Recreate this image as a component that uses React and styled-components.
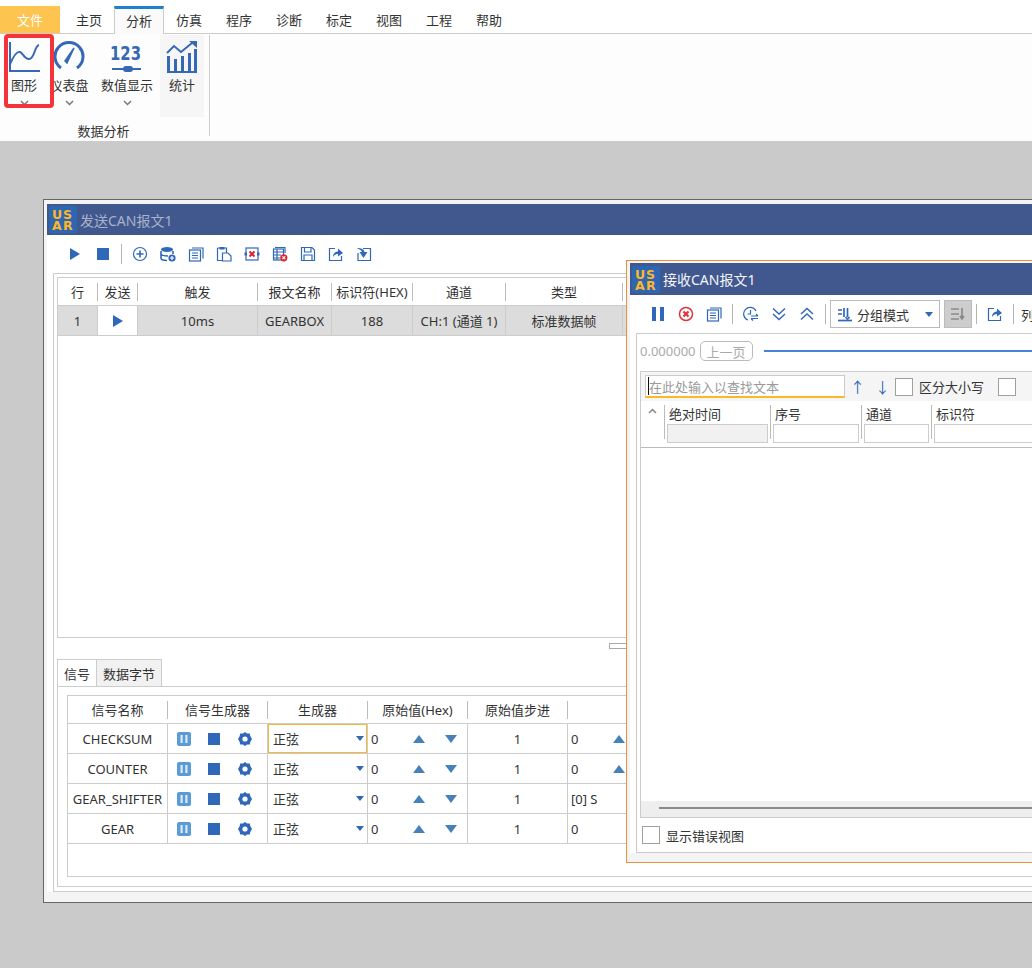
import React from "react";
import styled, { createGlobalStyle } from "styled-components";

const BLUE = "#2f67b9";
const STEEL = "#4682b8";
const LINE = "#cccccc";

const GlobalStyle = createGlobalStyle`
  html, body {
    margin: 0;
    padding: 0;
    height: 100%;
    overflow: hidden;
  }
  body {
    font-family: "Noto Sans", "Noto Sans CJK SC", sans-serif;
    font-size: 13px;
    color: #333;
  }
  * {
    box-sizing: border-box;
  }
`;

const Page = styled.div`
  position: relative;
  width: 1032px;
  height: 968px;
  display: flex;
  flex-direction: column;
  overflow: hidden;
  background: #cacaca;
`;

/* 上方功能区 */
const TabBar = styled.div`
  height: 34px;
  padding-top: 6px;
  display: flex;
  background: #fff;
  border-bottom: 1px solid ${LINE};
`;

const FileTab = styled.div`
  width: 60px;
  margin-right: 4px;
  display: flex;
  align-items: center;
  justify-content: center;
  background: #fdc44f;
  color: #fff;
`;

const MenuTab = styled.div`
  width: 50px;
  height: ${(props) => (props.$active ? "28px" : "27px")};
  display: flex;
  align-items: center;
  justify-content: center;
  ${(props) =>
    props.$active &&
    `
    background: #fafafa;
    border: 1px solid ${LINE};
    border-bottom: none;
    border-top: 3px solid #1f7fd0;
    padding-bottom: 2px;
  `}
`;

const Ribbon = styled.div`
  height: 107px;
  display: flex;
  background: #fdfdfd;
`;

const RibbonGroup = styled.div`
  width: 210px;
  margin-top: 1px;
  height: 101px;
  display: flex;
  flex-direction: column;
  border-right: 1px solid ${LINE};
`;

const RibbonTools = styled.div`
  height: 82px;
  display: flex;
  padding-left: 4px;
`;

const RibbonTool = styled.div`
  width: ${(props) => props.$width}px;
  height: 82px;
  display: flex;
  flex-direction: column;
  align-items: center;
  padding-top: 5px;
  background: ${(props) => (props.$hover ? "#f6f6f6" : "transparent")};
`;

const ToolIcon = styled.div`
  height: 33px;
  display: flex;
  align-items: center;
  justify-content: center;
`;

const ToolLabel = styled.div`
  margin-top: 3px;
  line-height: 18px;
  white-space: nowrap;
`;

const Caret = styled.div`
  margin-top: 6px;
  color: #777;
  display: flex;
`;

const GroupName = styled.div`
  text-align: center;
  line-height: 18px;
  margin-top: 5px;
  padding-right: 2px;
`;

const Highlight = styled.div`
  position: absolute;
  left: 4px;
  top: 34px;
  width: 50px;
  height: 74px;
  border: 4px solid #f4333a;
  border-radius: 4px;
`;

/* 桌面上的窗口 */
const Win = styled.div`
  position: absolute;
  left: ${(props) => props.$left}px;
  top: ${(props) => props.$top}px;
  width: ${(props) => props.$width}px;
  height: ${(props) => props.$height}px;
  border: 1px solid ${(props) => props.$edge};
  background: #f4f4f4;
  display: flex;
  flex-direction: column;
  padding: ${(props) => props.$pad};
`;

const TitleBar = styled.div`
  height: ${(props) => props.$height}px;
  flex: none;
  background: #41588f;
  display: flex;
  align-items: center;
  padding-left: 2px;
  gap: 3px;
  font-size: 14px;
  color: ${(props) => (props.$active ? "#f2f4f8" : "#a9b2c8")};
`;

const WinBody = styled.div`
  flex: 1;
  min-height: 0;
  background: #fff;
  display: flex;
  flex-direction: column;
`;

const Toolbar = styled.div`
  height: ${(props) => props.$height}px;
  flex: none;
  display: flex;
  align-items: center;
  padding-left: ${(props) => props.$left}px;
`;

const IconBtn = styled.div`
  width: 28px;
  height: 28px;
  flex: none;
  display: flex;
  align-items: center;
  justify-content: center;
`;

const ToolSep = styled.div`
  width: 1px;
  height: 20px;
  flex: none;
  margin: 0 ${(props) => props.$gap || 4}px;
  background: #b4b4b4;
`;

const Frame = styled.div`
  flex: 1;
  min-height: 0;
  margin: 0 0 ${(props) => props.$bottom}px ${(props) => props.$left}px;
  border: 1px solid ${LINE};
  padding: ${(props) => props.$pad};
  display: flex;
  flex-direction: column;
`;

/* 表格 */
const MsgBox = styled.div`
  height: 361px;
  flex: none;
  border: 1px solid ${LINE};
  display: flex;
  flex-direction: column;
`;

const HeadRow = styled.div`
  display: grid;
  grid-template-columns: ${(props) => props.$cols};
  height: ${(props) => props.$height}px;
  flex: none;
  align-items: center;
  border-bottom: 1px solid ${LINE};
`;

const HeadCell = styled.div`
  height: 18px;
  line-height: 18px;
  text-align: center;
  white-space: nowrap;
  border-right: 1px solid #bdbdbd;
`;

const BodyRow = styled.div`
  display: grid;
  grid-template-columns: ${(props) => props.$cols};
  height: 30px;
  flex: none;
  background: ${(props) => props.$bg || "#fff"};
  border-bottom: 1px solid ${LINE};
`;

const Cell = styled.div`
  display: flex;
  align-items: center;
  justify-content: center;
  white-space: nowrap;
  overflow: hidden;
  border-right: 1px solid ${LINE};
  background: ${(props) => props.$bg || "transparent"};
`;

const Splitter = styled.div`
  height: 21px;
  flex: none;
  padding: 5px 0 0 552px;
`;

const SplitThumb = styled.div`
  width: 20px;
  height: 6px;
  border: 1px solid #aaa;
  background: #fff;
`;

const TabStrip = styled.div`
  height: 27px;
  flex: none;
  display: flex;
`;

const PanelTab = styled.div`
  width: ${(props) => props.$width}px;
  display: flex;
  align-items: center;
  justify-content: center;
  border: 1px solid ${LINE};
  border-left: ${(props) => (props.$active ? `1px solid ${LINE}` : "none")};
  border-bottom: ${(props) => (props.$active ? "1px solid #fff" : `1px solid ${LINE}`)};
  margin-bottom: -1px;
  background: ${(props) => (props.$active ? "#fff" : "#f1f1f1")};
`;

const TabPanel = styled.div`
  flex: 1;
  min-height: 0;
  border: 1px solid ${LINE};
  padding: 8px 0 9px 9px;
  display: flex;
`;

const SignalTable = styled.div`
  flex: 1;
  border: 1px solid ${LINE};
  display: flex;
  flex-direction: column;
`;

const ButtonsCell = styled(Cell)`
  justify-content: flex-start;
  padding-left: 9px;
  gap: 17px;
`;

const GenSelect = styled(Cell)`
  justify-content: space-between;
  padding: 0 3px 0 5px;
  ${(props) => props.$focus && "box-shadow: inset 0 0 0 1px #f5b935;"}
`;

const StepCell = styled(Cell)`
  justify-content: flex-start;
  padding-left: 3px;
`;

const StepValue = styled.span`
  width: 42px;
`;

const StepArrows = styled.span`
  display: flex;
  gap: 20px;
`;

const Tri = styled.span`
  width: 0;
  height: 0;
  border-left: 6px solid transparent;
  border-right: 6px solid transparent;
  ${(props) =>
    props.$down
      ? `border-top: 8px solid ${STEEL};`
      : `border-bottom: 8px solid ${STEEL};`}
`;

const SmallDown = styled.span`
  width: 0;
  height: 0;
  border-left: 4px solid transparent;
  border-right: 4px solid transparent;
  border-top: 5px solid ${BLUE};
`;

/* 接收窗口 */
const Combo = styled.div`
  width: 110px;
  height: 28px;
  flex: none;
  border: 1px solid #bbb;
  display: flex;
  align-items: center;
  padding: 0 6px;
  gap: 4px;
`;

const ComboText = styled.span`
  flex: 1;
`;

const Toggle = styled.div`
  width: 28px;
  height: 28px;
  flex: none;
  margin-left: 4px;
  background: #cdcdcd;
  border: 1px solid #bbb;
  display: flex;
  align-items: center;
  justify-content: center;
`;

const ClippedLabel = styled.span`
  margin-left: 3px;
  white-space: nowrap;
`;

const Pager = styled.div`
  height: 37px;
  flex: none;
  display: flex;
  align-items: center;
  padding: 0 0 3px 3px;
  color: #aaa;
`;

const PageBtn = styled.div`
  width: 53px;
  height: 20px;
  margin: 0 11px 0 4px;
  display: flex;
  align-items: center;
  justify-content: center;
  border: 1px solid #bbb;
  border-radius: 5px;
`;

const TimeLine = styled.div`
  flex: 1;
  height: 2px;
  background: #4a80e0;
`;

const LogBox = styled.div`
  flex: 1;
  min-height: 0;
  margin-left: 3px;
  border: 1px solid ${LINE};
  border-width: 1px 0 1px 1px;
  display: flex;
  flex-direction: column;
`;

const SearchRow = styled.div`
  height: 29px;
  flex: none;
  background: #f5f5f5;
  display: flex;
  align-items: center;
  padding-left: 4px;
`;

const SearchInput = styled.div`
  width: 200px;
  height: 23px;
  flex: none;
  background: #fff;
  border: 1px solid #ccc;
  border-bottom: 2px solid #fbb829;
  color: #9a9a9a;
  display: flex;
  align-items: center;
`;

const Cursor = styled.span`
  width: 1px;
  height: 18px;
  background: #111;
  margin-left: 2px;
`;

const ArrowBtn = styled.span`
  width: 25px;
  text-align: center;
  color: ${BLUE};
  font-size: 15px;
  flex: none;
`;

const Check = styled.span`
  width: 18px;
  height: 18px;
  flex: none;
  border: 1px solid #a0a0a0;
  background: #fff;
`;

const CheckLabel = styled.span`
  margin: 0 14px 0 6px;
  white-space: nowrap;
`;

const LogHead = styled.div`
  height: 47px;
  flex: none;
  display: grid;
  grid-template-columns: 23px 106px 91px 70px 200px;
  border-bottom: 1px solid #bbb;
  padding-top: 4px;
`;

const SortCell = styled.div`
  display: flex;
  justify-content: center;
  padding-top: 3px;
  color: #888;
`;

const LogCol = styled.div`
  height: 34px;
  border-left: 1px solid #bbb;
  padding-left: 4px;
  line-height: 18px;
  white-space: nowrap;
`;

const FilterBox = styled.div`
  height: 19px;
  margin: 1px 2px 0 -2px;
  border: 1px solid ${LINE};
  background: ${(props) => (props.$off ? "#f1f1f1" : "#fff")};
`;

const LogBody = styled.div`
  flex: 1;
  min-height: 0;
`;

const HScroll = styled.div`
  height: 16px;
  flex: none;
  background: #eeeeee;
  padding: 6px 0 0 18px;
`;

const HThumb = styled.div`
  height: 2px;
  background: #8a8a8a;
`;

const ErrorRow = styled.div`
  height: 34px;
  flex: none;
  display: flex;
  align-items: center;
  padding: 0 0 0 5px;
`;

const Logo = () => (
  <svg width="28" height="27" viewBox="0 0 28 27">
    <rect width="28" height="27" rx="2" fill="#2f66b2" />
    <g fontFamily="'DejaVu Sans', sans-serif" fontWeight="bold" fontSize="12.5" fill="#fcb62b">
      <text x="3" y="12.5">U</text>
      <text x="14" y="12.5">S</text>
      <text x="3" y="24">A</text>
      <text x="14" y="24">R</text>
    </g>
  </svg>
);

const Icon = ({ size = 16, color = BLUE, children }) => (
  <svg width={size} height={size} viewBox="0 0 16 16" fill="none" stroke={color} strokeWidth="1.2">
    {children}
  </svg>
);

const icons = {
  play: <path d="M3 2 L13 8 L3 14 Z" fill={BLUE} stroke="none" />,
  stop: <rect x="2" y="2" width="12" height="12" fill={BLUE} stroke="none" />,
  addCircle: (
    <>
      <circle cx="8" cy="8" r="6.5" />
      <path d="M4.5 8 H11.5 M8 4.5 V11.5" strokeWidth="1.6" />
    </>
  ),
  dbAdd: (
    <>
      <ellipse cx="7" cy="3.5" rx="6" ry="2.5" fill={BLUE} stroke="none" />
      <path d="M1 5 V12 C1 14 5 14.5 7 14.5 M13 5 V8 M1 8 C2 10 5 10 8 10" strokeWidth="1.6" />
      <circle cx="12" cy="12" r="3.6" fill={BLUE} stroke="none" />
      <path d="M10 12 H14 M12 10 V14" stroke="#fff" />
    </>
  ),
  doc: (
    <>
      <rect x="1.5" y="4" width="11" height="11" />
      <path d="M4 2 H15 V12.5 M4 7 H10 M4 9.5 H10 M4 12 H10" />
    </>
  ),
  paste: (
    <>
      <path d="M1.5 2 H10.5 V7 M1.5 2 V14.5 H6" />
      <path d="M6.5 7 H12 L15 10 V15 H6.5 Z" />
      <rect x="3.5" y="1" width="5" height="2.5" fill={BLUE} stroke="none" />
    </>
  ),
  delBox: (
    <>
      <rect x="2" y="2" width="12" height="12" />
      <rect x="0.5" y="6.5" width="2.5" height="3" fill={BLUE} stroke="none" />
      <rect x="13" y="6.5" width="2.5" height="3" fill={BLUE} stroke="none" />
      <path d="M5.5 5.5 L10.5 10.5 M10.5 5.5 L5.5 10.5" stroke="#d8272d" strokeWidth="2" />
    </>
  ),
  tableDel: (
    <>
      <rect x="1.5" y="3" width="10" height="11" />
      <path d="M1.5 6 H11.5 M1.5 9 H9 M1.5 12 H8 M5 3 V14 M3 1.5 H13 V7" />
      <circle cx="11.8" cy="11.8" r="3.6" fill="#d8272d" stroke="none" />
      <path d="M10.4 10.4 L13.2 13.2 M13.2 10.4 L10.4 13.2" stroke="#fff" />
    </>
  ),
  save: (
    <>
      <path d="M1.5 1.5 H12 L14.5 4 V14.5 H1.5 Z" />
      <path d="M4.5 2 V6 H11 V2 M4 14 V9 H12 V14" />
    </>
  ),
  exportBox: (
    <>
      <path d="M7 2.5 H1.5 V14.5 H13.5 V10" />
      <path d="M5 11 C5 7 8 5.5 10 5.5 V2.5 L15 7 L10 10.5 V8 C8 8 6 9 5 11 Z" fill={BLUE} stroke="none" />
    </>
  ),
  importBox: (
    <>
      <path d="M7 2.5 H14.5 V14.5 H2 V7" />
      <path d="M1 2 C5 2 8 3 8.5 6 H11.5 L7.5 12 L3.5 6 H6 C5.5 4 3 3.5 1 2 Z" fill={BLUE} stroke="none" />
    </>
  ),
  pause: (
    <>
      <rect x="2" y="1" width="4" height="14" fill={BLUE} stroke="none" />
      <rect x="10" y="1" width="4" height="14" fill={BLUE} stroke="none" />
    </>
  ),
  stopX: (
    <>
      <circle cx="8" cy="8" r="6.5" stroke="#e0343a" strokeWidth="1.5" />
      <path d="M5.5 5.5 L10.5 10.5 M10.5 5.5 L5.5 10.5" stroke="#e0343a" strokeWidth="2.2" />
    </>
  ),
  clockSwap: (
    <>
      <path d="M13 5 A6.5 6.5 0 1 0 5 14" />
      <path d="M7.5 4 V8 H4.5" />
      <path d="M8 10 H15 M15 12.5 H8 M13 8 L15 10 M10 14.5 L8 12.5" />
    </>
  ),
  chevDown: <path d="M2 2.5 L8 8 L14 2.5 M2 8 L8 13.5 L14 8" strokeWidth="1.4" />,
  chevUp: <path d="M2 8 L8 2.5 L14 8 M2 13.5 L8 8 L14 13.5" strokeWidth="1.4" />,
  group: (
    <>
      <path d="M1 4 H5 M1 8 H5 M7 2 V11 M10.5 2 V11 M8.5 11 L10.5 13 L12.5 11" strokeWidth="1.7" />
      <path d="M1 14.5 H15" strokeWidth="1.7" />
    </>
  ),
  gear: (
    <>
      <path
        d="M8 1 L10 2.6 L12.8 2.4 L13.3 5 L15 8 L13.3 11 L12.8 13.6 L10 13.4 L8 15 L6 13.4 L3.2 13.6 L2.7 11 L1 8 L2.7 5 L3.2 2.4 L6 2.6 Z"
        fill={BLUE}
        stroke="none"
      />
      <circle cx="8" cy="8" r="2.6" fill="#fff" stroke="none" />
    </>
  ),
};

const PauseTile = () => (
  <svg width="14" height="14" viewBox="0 0 14 14">
    <rect width="14" height="14" rx="2" fill="#5b9bd5" />
    <rect x="3.5" y="3" width="2.2" height="8" fill="#dbe9f6" />
    <rect x="8.3" y="3" width="2.2" height="8" fill="#dbe9f6" />
  </svg>
);

const SolidStop = () => (
  <svg width="12" height="12" viewBox="0 0 12 12">
    <rect width="12" height="12" fill={BLUE} />
  </svg>
);

const GraphIcon = () => (
  <svg width="32" height="32" viewBox="0 0 32 32" fill="none" stroke="#3568b5" strokeWidth="2">
    <path d="M2 1 V30 H32" />
    <path d="M2 23 C6 14 9 10 12 11 C15 12 16 18 21 18 C27 18 26 5 31 4" />
  </svg>
);

const GaugeIcon = () => (
  <svg width="32" height="32" viewBox="0 0 32 32" fill="none" stroke="#3568b5" strokeWidth="3">
    <path d="M8 27 A14 14 0 1 1 24 27" />
    <path d="M21 7 L12 20 L14 22 Z" fill="#3568b5" strokeWidth="1.5" />
  </svg>
);

const NumberIcon = () => (
  <svg width="34" height="32" viewBox="0 0 34 32">
    <text x="0" y="19" fontFamily="'DejaVu Sans', sans-serif" fontWeight="bold" fontSize="19" fill="#3568b5" textLength="31" lengthAdjust="spacingAndGlyphs">
      123
    </text>
    <path d="M2 28 H31" stroke="#3568b5" strokeWidth="2" />
    <rect x="13" y="25" width="10" height="6" rx="3" fill="#3568b5" />
  </svg>
);

const StatsIcon = () => (
  <svg width="32" height="32" viewBox="0 0 32 32" fill="#3568b5">
    <rect x="1" y="15" width="3" height="15" />
    <rect x="8" y="18" width="3" height="12" />
    <rect x="15" y="15" width="3" height="15" />
    <rect x="22" y="12" width="3" height="18" />
    <rect x="28" y="8" width="3" height="22" />
    <rect x="1" y="30" width="30" height="2" />
    <path d="M1 12 L8 5 L15 11 L26 2" fill="none" stroke="#3568b5" strokeWidth="2" />
    <path d="M23 0 H31 V7 Z" />
  </svg>
);

const ChevronSmall = () => (
  <svg width="9" height="6" viewBox="0 0 9 6" fill="none" stroke="currentColor" strokeWidth="1.5">
    <path d="M1 1 L4.5 4.5 L8 1" />
  </svg>
);

const menus = ["主页", "分析", "仿真", "程序", "诊断", "标定", "视图", "工程", "帮助"];

const ribbonTools = [
  { name: "图形", width: 40, icon: <GraphIcon />, caret: true },
  { name: "仪表盘", width: 50, icon: <GaugeIcon />, caret: true },
  { name: "数值显示", width: 66, icon: <NumberIcon />, caret: true },
  { name: "统计", width: 44, icon: <StatsIcon />, hover: true },
];

const sendTools = ["play", "stop", "|", "addCircle", "dbAdd", "doc", "paste", "delBox", "tableDel", "save", "exportBox", "importBox"];

const msgCols = "40px 40px 120px 74px 81px 93px 117px 200px";
const msgHead = ["行", "发送", "触发", "报文名称", "标识符(HEX)", "通道", "类型"];

const sigCols = "100px 100px 100px 100px 100px 160px";
const sigHead = ["信号名称", "信号生成器", "生成器", "原始值(Hex)", "原始值步进", "物理值"];
const signals = [
  { name: "CHECKSUM", phys: "0", arrows: true },
  { name: "COUNTER", phys: "0", arrows: true },
  { name: "GEAR_SHIFTER", phys: "[0] S" },
  { name: "GEAR", phys: "0" },
];

const Arrows = () => (
  <StepArrows>
    <Tri />
    <Tri $down />
  </StepArrows>
);

const App = () => {
  return (
    <Page>
      <GlobalStyle />
      <TabBar>
        <FileTab>文件</FileTab>
        {menus.map((m) => (
          <MenuTab key={m} $active={m === "分析"}>
            {m}
          </MenuTab>
        ))}
      </TabBar>
      <Ribbon>
        <RibbonGroup>
          <RibbonTools>
            {ribbonTools.map((t) => (
              <RibbonTool key={t.name} $width={t.width} $hover={t.hover}>
                <ToolIcon>{t.icon}</ToolIcon>
                <ToolLabel>{t.name}</ToolLabel>
                {t.caret && (
                  <Caret>
                    <ChevronSmall />
                  </Caret>
                )}
              </RibbonTool>
            ))}
          </RibbonTools>
          <GroupName>数据分析</GroupName>
        </RibbonGroup>
      </Ribbon>
      <Highlight />

      {/* 发送窗口 */}
      <Win $left={43} $top={199} $width={1100} $height={704} $edge="#666" $pad="4px 3px 10px 3px">
        <TitleBar $height={31}>
          <Logo />
          发送CAN报文1
        </TitleBar>
        <WinBody>
          <Toolbar $height={38} $left={14}>
            {sendTools.map((t, i) =>
              t === "|" ? (
                <ToolSep key={i} $gap={0} />
              ) : (
                <IconBtn key={t}>
                  <Icon>{icons[t]}</Icon>
                </IconBtn>
              )
            )}
          </Toolbar>
          <Frame $left={6} $bottom={0} $pad="3px 0 4px 3px">
            <MsgBox>
              <HeadRow $cols={msgCols} $height={28}>
                {msgHead.map((h) => (
                  <HeadCell key={h}>{h}</HeadCell>
                ))}
              </HeadRow>
              <BodyRow $cols={msgCols} $bg="#dcdcdc">
                <Cell>1</Cell>
                <Cell $bg="#fff">
                  <Icon>{icons.play}</Icon>
                </Cell>
                <Cell>10ms</Cell>
                <Cell>GEARBOX</Cell>
                <Cell>188</Cell>
                <Cell>CH:1 (通道 1)</Cell>
                <Cell>标准数据帧</Cell>
                <Cell />
              </BodyRow>
            </MsgBox>
            <Splitter>
              <SplitThumb />
            </Splitter>
            <TabStrip>
              <PanelTab $active $width={40}>
                信号
              </PanelTab>
              <PanelTab $width={65}>数据字节</PanelTab>
            </TabStrip>
            <TabPanel>
              <SignalTable>
                <HeadRow $cols={sigCols} $height={28}>
                  {sigHead.map((h) => (
                    <HeadCell key={h}>{h}</HeadCell>
                  ))}
                </HeadRow>
                {signals.map((s, i) => (
                  <BodyRow key={s.name} $cols={sigCols}>
                    <Cell>{s.name}</Cell>
                    <ButtonsCell>
                      <PauseTile />
                      <SolidStop />
                      <Icon>{icons.gear}</Icon>
                    </ButtonsCell>
                    <GenSelect $focus={i === 0}>
                      正弦
                      <SmallDown />
                    </GenSelect>
                    <StepCell>
                      <StepValue>0</StepValue>
                      <Arrows />
                    </StepCell>
                    <Cell>1</Cell>
                    <StepCell>
                      <StepValue>{s.phys}</StepValue>
                      {s.arrows && <Arrows />}
                    </StepCell>
                  </BodyRow>
                ))}
              </SignalTable>
            </TabPanel>
          </Frame>
        </WinBody>
      </Win>

      {/* 接收窗口 */}
      <Win $left={626} $top={260} $width={500} $height={603} $edge="#e8913a" $pad="2px 3px 9px 3px">
        <TitleBar $height={32} $active>
          <Logo />
          接收CAN报文1
        </TitleBar>
        <WinBody>
          <Toolbar $height={38} $left={14}>
            <IconBtn>
              <Icon>{icons.pause}</Icon>
            </IconBtn>
            <IconBtn>
              <Icon>{icons.stopX}</Icon>
            </IconBtn>
            <IconBtn>
              <Icon>{icons.doc}</Icon>
            </IconBtn>
            <ToolSep $gap={0} />
            <IconBtn>
              <Icon>{icons.clockSwap}</Icon>
            </IconBtn>
            <IconBtn>
              <Icon>{icons.chevDown}</Icon>
            </IconBtn>
            <IconBtn>
              <Icon>{icons.chevUp}</Icon>
            </IconBtn>
            <ToolSep $gap={0} />
            <Combo>
              <Icon>{icons.group}</Icon>
              <ComboText>分组模式</ComboText>
              <SmallDown />
            </Combo>
            <Toggle>
              <Icon color="#8a8a8a">
                <path d="M1 3 H9 M1 8 H9 M1 13 H9 M12 2 V11 M10 10 L12 13 L14 10" strokeWidth="1.7" />
              </Icon>
            </Toggle>
            <ToolSep $gap={4} />
            <IconBtn>
              <Icon>{icons.exportBox}</Icon>
            </IconBtn>
            <ToolSep $gap={4} />
            <ClippedLabel>列</ClippedLabel>
          </Toolbar>
          <Frame $left={6} $bottom={0} $pad="0 0 0 0">
            <Pager>
              0.000000
              <PageBtn>上一页</PageBtn>
              <TimeLine />
            </Pager>
            <LogBox>
              <SearchRow>
                <SearchInput>
                  <Cursor />
                  在此处输入以查找文本
                </SearchInput>
                <ArrowBtn>↑</ArrowBtn>
                <ArrowBtn>↓</ArrowBtn>
                <Check />
                <CheckLabel>区分大小写</CheckLabel>
                <Check />
              </SearchRow>
              <LogHead>
                <SortCell>
                  <svg width="9" height="6" viewBox="0 0 9 6" fill="none" stroke="currentColor" strokeWidth="1.5">
                    <path d="M1 5 L4.5 1.5 L8 5" />
                  </svg>
                </SortCell>
                <LogCol>
                  绝对时间
                  <FilterBox $off />
                </LogCol>
                <LogCol>
                  序号
                  <FilterBox />
                </LogCol>
                <LogCol>
                  通道
                  <FilterBox />
                </LogCol>
                <LogCol>
                  标识符
                  <FilterBox />
                </LogCol>
              </LogHead>
              <LogBody />
              <HScroll>
                <HThumb />
              </HScroll>
            </LogBox>
            <ErrorRow>
              <Check />
              <CheckLabel>显示错误视图</CheckLabel>
            </ErrorRow>
          </Frame>
        </WinBody>
      </Win>
    </Page>
  );
};

export default App;
